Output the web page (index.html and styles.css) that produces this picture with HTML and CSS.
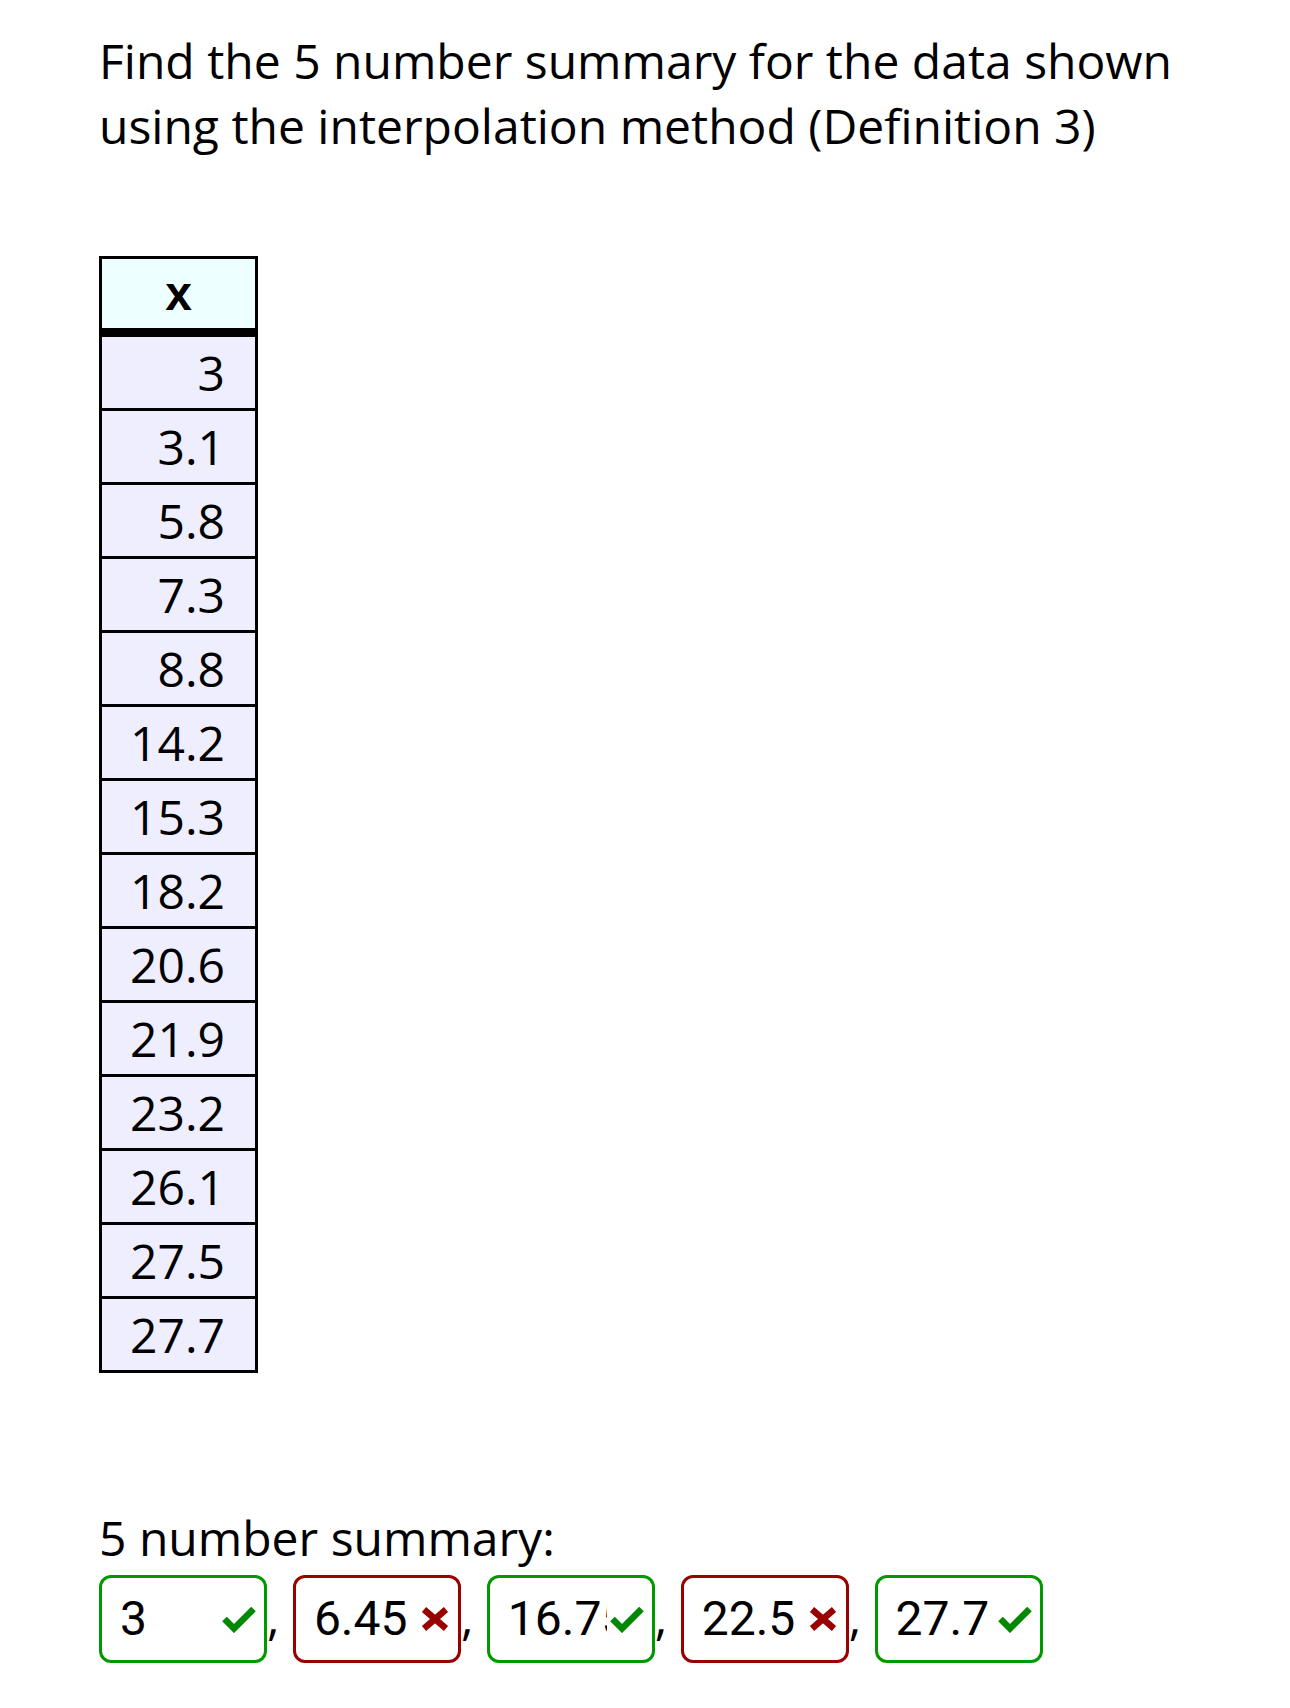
FILE: index.html
```html
<!DOCTYPE html>
<html lang="en">
<head>
<meta charset="utf-8">
<title>5 number summary</title>
<link rel="stylesheet" href="styles.css">
</head>
<body>
<main class="page">
  <p class="question">Find the 5 number summary for the data shown using the interpolation method (Definition 3)</p>

  <table class="data">
    <thead>
      <tr><th>x</th></tr>
    </thead>
    <tbody>
      <tr><td>3</td></tr>
      <tr><td>3.1</td></tr>
      <tr><td>5.8</td></tr>
      <tr><td>7.3</td></tr>
      <tr><td>8.8</td></tr>
      <tr><td>14.2</td></tr>
      <tr><td>15.3</td></tr>
      <tr><td>18.2</td></tr>
      <tr><td>20.6</td></tr>
      <tr><td>21.9</td></tr>
      <tr><td>23.2</td></tr>
      <tr><td>26.1</td></tr>
      <tr><td>27.5</td></tr>
      <tr><td>27.7</td></tr>
    </tbody>
  </table>

  <p class="label">5 number summary:</p>
  <div class="answers"><span class="box ok"><span class="val">3</span><span class="mark"><svg class="check" viewBox="0 0 36 28" width="36" height="28"><polyline points="3.5,14 13,23.5 32.5,4" /></svg></span></span>, <span class="box bad"><span class="val">6.45</span><span class="mark"><svg class="cross" viewBox="0 0 28 24" width="28" height="24"><line x1="3" y1="2.5" x2="25" y2="21.5"/><line x1="25" y1="2.5" x2="3" y2="21.5"/></svg></span></span>, <span class="box ok"><span class="val">16.75</span><span class="mark"><svg class="check" viewBox="0 0 36 28" width="36" height="28"><polyline points="3.5,14 13,23.5 32.5,4" /></svg></span></span>, <span class="box bad"><span class="val">22.5</span><span class="mark"><svg class="cross" viewBox="0 0 28 24" width="28" height="24"><line x1="3" y1="2.5" x2="25" y2="21.5"/><line x1="25" y1="2.5" x2="3" y2="21.5"/></svg></span></span>, <span class="box ok"><span class="val">27.7</span><span class="mark"><svg class="check" viewBox="0 0 36 28" width="36" height="28"><polyline points="3.5,14 13,23.5 32.5,4" /></svg></span></span></div>
</main>
</body>
</html>
```

FILE: styles.css
```css
html, body {
  margin: 0;
  padding: 0;
  background: #ffffff;
}

body {
  font-family: "Open Sans", "Noto Sans", sans-serif;
  font-size: 48px;
  color: #000000;
}

.page {
  padding: 28px 0 40px 99px;
}

.question {
  margin: 0;
  max-width: 1100px;
  line-height: normal;
}

.data {
  margin-top: 98px;
  border-collapse: separate;
  border-spacing: 0;
  border: 3px solid #000;
  border-bottom: 0;
  width: 159px;
}

.data th {
  font-family: "Liberation Sans", Arial, sans-serif;
  font-weight: bold;
  font-size: 48px;
  background: #eeffff;
  text-align: center;
  padding: 3px 0;
  line-height: 63px;
  border-bottom: 9px solid #000;
}

.data td {
  font-family: "Open Sans", "Noto Sans", sans-serif;
  font-size: 48px;
  background: #eeeeff;
  text-align: right;
  padding: 3px 30px 3px 0;
  line-height: 65px;
  border-bottom: 3px solid #000;
}

.label {
  margin: 132px 0 0 0;
  line-height: normal;
}

.answers {
  margin-top: 5px;
  white-space: nowrap;
  word-spacing: 1px;
}

.box {
  display: inline-flex;
  align-items: center;
  box-sizing: border-box;
  width: 168px;
  height: 88px;
  border: 3px solid;
  border-radius: 12px;
  vertical-align: baseline;
  background: #fff;
  word-spacing: 0;
}

.box.ok {
  border-color: #009900;
}

.box.bad {
  border-color: #990000;
}

.val {
  font-family: Roboto, "Liberation Sans", Arial, sans-serif;
  font-size: 48px;
  line-height: 56px;
  width: 99px;
  margin-left: 18px;
  overflow: hidden;
  white-space: nowrap;
}

.mark {
  flex: 1;
  display: flex;
  justify-content: flex-end;
  align-items: center;
}

.ok .mark {
  padding-right: 7px;
}

.bad .mark {
  padding-right: 9px;
}

.check polyline {
  fill: none;
  stroke: #008800;
  stroke-width: 6.5;
  stroke-linecap: butt;
  stroke-linejoin: miter;
}

.cross line {
  stroke: #990000;
  stroke-width: 6.5;
  stroke-linecap: butt;
}
```
